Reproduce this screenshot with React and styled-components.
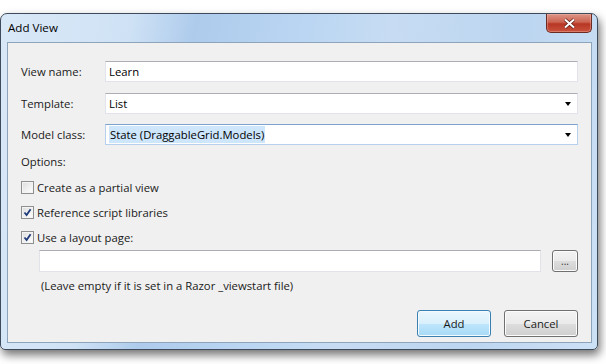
import React from "react";
import styled, { createGlobalStyle } from "styled-components";

const Global = createGlobalStyle`
  html, body {
    margin: 0;
    padding: 0;
    background: #ffffff;
  }
  body {
    font-family: "Open Sans", "Noto Sans", sans-serif;
    font-size: 11.3px;
    line-height: 16px;
    color: #000;
  }
`;

const Page = styled.div`
  width: 606px;
  height: 364px;
  overflow: hidden;
  padding-top: 13px;
  box-sizing: border-box;
`;

const Window = styled.div`
  width: 598px;
  height: 337px;
  box-sizing: border-box;
  border: 1px solid #3d4b5c;
  border-radius: 7px 7px 5px 5px;
  background: linear-gradient(100deg, #d9e8f7 0%, #cfe2f5 20%, #aecbec 30%, #b9d5f2 45%, #c7dcf3 60%, #bcd5f0 80%, #cde1f5 100%);
  box-shadow: 2px 5px 10px rgba(0, 0, 0, 0.55);
  display: flex;
  flex-direction: column;
  padding: 0 5px 6px 6px;
`;

const TitleBar = styled.div`
  height: 28px;
  display: flex;
  justify-content: space-between;
  align-items: flex-start;
`;

const Title = styled.span`
  font-size: 11.6px;
  margin: 6px 0 0 1px;
  color: #000;
`;

const CloseButton = styled.div`
  width: 46px;
  height: 19px;
  box-sizing: border-box;
  border: 1px solid #6b2a22;
  border-top: none;
  border-radius: 0 0 5px 5px;
  background: linear-gradient(180deg, #dc9486 0%, #cc6452 45%, #b73623 55%, #c9533e 100%);
  box-shadow: inset 0 0 0 1px rgba(255, 200, 190, 0.35);
  display: flex;
  align-items: center;
  justify-content: center;
`;

const Client = styled.div`
  flex: 1;
  background: #f0f0f0;
  border: 1px solid #8ea4bb;
  padding: 18px 13px 0 13px;
  display: flex;
  flex-direction: column;
`;

const FieldRow = styled.div`
  display: grid;
  grid-template-columns: 84px 1fr;
  align-items: center;
  margin-bottom: ${(p) => p.$gap}px;
`;

const Label = styled.span`
  color: #1a1a1a;
`;

const Box = styled.div`
  position: relative;
  height: 21px;
  box-sizing: border-box;
  background: #fff;
  border: 1px solid ${(p) => (p.$focus ? "#b6d1ee" : "#e2e3ea")};
  border-top-color: ${(p) => (p.$focus ? "#7da2ce" : "#abadb3")};
  display: flex;
  align-items: center;
  padding-left: 3px;
  color: #000;
`;

const Selected = styled.span`
  background: #cde6fb;
  padding: 0 1px;
  line-height: 17px;
`;

const Arrow = styled.span`
  position: absolute;
  right: 6px;
  top: 8px;
  width: 0;
  height: 0;
  border-left: 3.5px solid transparent;
  border-right: 3.5px solid transparent;
  border-top: 4px solid #000;
`;

const Options = styled.div`
  margin: 9px 0 5px;
  color: #1a1a1a;
`;

const CheckRow = styled.label`
  display: flex;
  align-items: center;
  gap: 3px;
  height: 25px;
  color: #1a1a1a;
`;

const CheckBox = styled.span`
  width: 13px;
  height: 13px;
  box-sizing: border-box;
  border: 1px solid #8e8f8f;
  background: linear-gradient(135deg, #dcdcdc 0%, #f2f2f2 60%, #ffffff 100%);
  box-shadow: inset 0 0 0 1px #f4f4f4;
  display: flex;
  align-items: center;
  justify-content: center;
`;

const LayoutRow = styled.div`
  display: flex;
  gap: 11px;
  margin-left: 18px;
`;

const PathInput = styled(Box)`
  flex: 1;
  height: 22px;
`;

const SmallButton = styled.div`
  width: 26px;
  height: 22px;
  box-sizing: border-box;
  border: 1px solid #707070;
  border-radius: 3px;
  background: linear-gradient(180deg, #f2f2f2 0%, #ebebeb 50%, #dddddd 51%, #cfcfcf 100%);
  box-shadow: inset 0 0 0 1px #fcfcfc;
  display: flex;
  justify-content: center;
  align-items: flex-end;
  padding-bottom: 5px;
  font-size: 10px;
  line-height: 1;
  color: #333;
`;

const Hint = styled.div`
  margin: 6px 0 0 20px;
  color: #1a1a1a;
`;

const Footer = styled.div`
  margin-top: auto;
  margin-bottom: 5px;
  display: flex;
  justify-content: flex-end;
  gap: 13px;
`;

const Button = styled.div`
  width: 74px;
  height: 27px;
  box-sizing: border-box;
  border: 1px solid ${(p) => (p.$default ? "#3c7fb1" : "#707070")};
  border-radius: 3px;
  background: ${(p) =>
    p.$default
      ? "linear-gradient(180deg, #eaf6fd 0%, #d9f0fc 50%, #bee6fd 51%, #a7d9f5 100%)"
      : "linear-gradient(180deg, #f2f2f2 0%, #ebebeb 50%, #dddddd 51%, #cfcfcf 100%)"};
  box-shadow: inset 0 0 0 1px ${(p) => (p.$default ? "#f3fbff" : "#fcfcfc")};
  display: flex;
  align-items: center;
  justify-content: center;
  color: #1a1a1a;
`;

const Check = () => (
  <svg width="9" height="9" viewBox="0 0 9 9">
    <path d="M1.5 4.5 L3.6 7 L7.6 1.2" fill="none" stroke="#1f3a7a" strokeWidth="1.8" />
  </svg>
);

function Option({ checked, children }) {
  return (
    <CheckRow>
      <CheckBox>{checked && <Check />}</CheckBox>
      {children}
    </CheckRow>
  );
}

export default function App() {
  return (
    <>
      <Global />
      <Page>
        <Window>
          <TitleBar>
            <Title>Add View</Title>
            <CloseButton>
              <svg width="13" height="11" viewBox="0 0 13 11">
                <path d="M2 1.5 L11 9.5 M11 1.5 L2 9.5" stroke="#5a1a12" strokeWidth="3.4" />
                <path d="M2 1.5 L11 9.5 M11 1.5 L2 9.5" stroke="#ffffff" strokeWidth="2" />
              </svg>
            </CloseButton>
          </TitleBar>
          <Client>
            <FieldRow $gap={11}>
              <Label>View name:</Label>
              <Box>Learn</Box>
            </FieldRow>
            <FieldRow $gap={10}>
              <Label>Template:</Label>
              <Box>
                List
                <Arrow />
              </Box>
            </FieldRow>
            <FieldRow $gap={0}>
              <Label>Model class:</Label>
              <Box $focus>
                <Selected>State (DraggableGrid.Models)</Selected>
                <Arrow />
              </Box>
            </FieldRow>
            <Options>Options:</Options>
            <Option>Create as a partial view</Option>
            <Option checked>Reference script libraries</Option>
            <Option checked>Use a layout page:</Option>
            <LayoutRow>
              <PathInput />
              <SmallButton>...</SmallButton>
            </LayoutRow>
            <Hint>(Leave empty if it is set in a Razor _viewstart file)</Hint>
            <Footer>
              <Button $default>Add</Button>
              <Button>Cancel</Button>
            </Footer>
          </Client>
        </Window>
      </Page>
    </>
  );
}
